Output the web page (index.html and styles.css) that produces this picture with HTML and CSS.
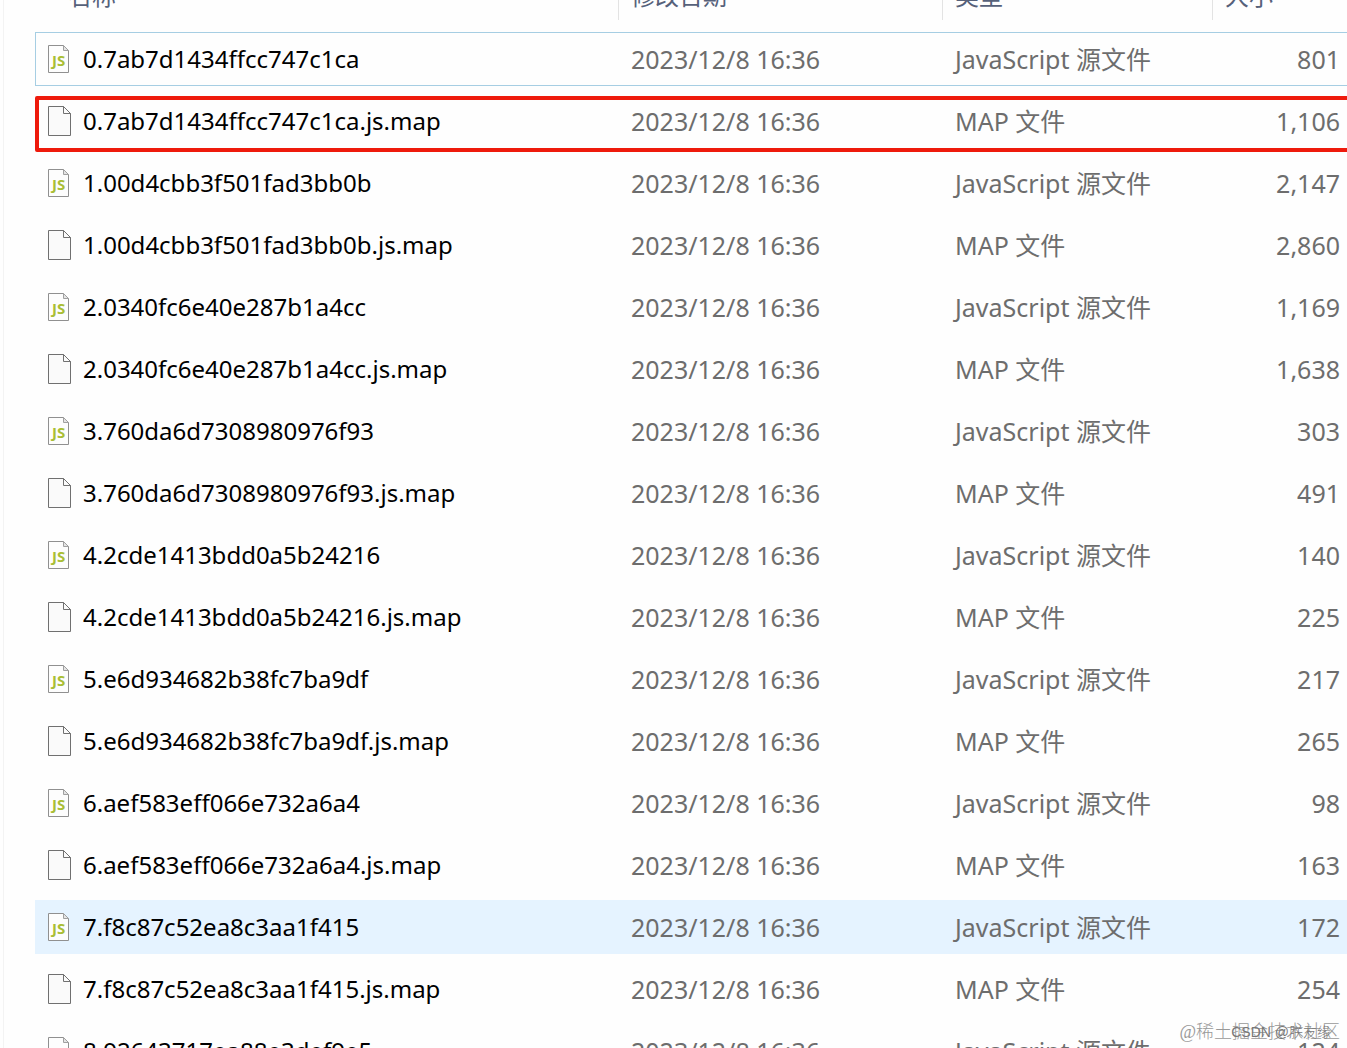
FILE: index.html
```html
<!DOCTYPE html>
<html lang="zh-CN">
  <head>
    <meta charset="utf-8">
    <title>文件列表</title>
    <link rel="stylesheet" href="styles.css">
  </head>
  <body>
    <svg class="symbols" aria-hidden="true">
      <symbol id="icon-js" viewBox="0 0 24 30">
        <path class="paper" d="M.5 1.5H15.5L20.5 6.5V28.5H.5Z" />
        <path class="fold" d="M15.5 1.5V6.5H20.5Z" />
        <text class="js-text" x="4" y="22">JS</text>
      </symbol>
      <symbol id="icon-file" viewBox="0 0 24 30">
        <path class="sheet" d="M.5 .5H15.5L22.5 7.5V29.5H.5Z" />
        <path class="sheet" d="M15.5 .5V7.5H22.5Z" />
      </symbol>
    </svg>

    <div class="explorer">
      <table class="files">
        <thead>
          <tr class="head">
            <th>名称</th>
            <th>修改日期</th>
            <th>类型</th>
            <th>大小</th>
          </tr>
        </thead>
        <tbody id="fileList"></tbody>
      </table>
      <div class="watermark">@稀土掘金技术社区</div>
      <div class="watermark author">CSDN @朕友缘</div>
    </div>

    <script src="script.js"></script>
  </body>
</html>
```
FILE: styles.css
```css
body {
  margin: 0;
  font-family: "Noto Sans", "Noto Sans CJK SC", sans-serif;
  font-size: 25px;
  line-height: 36px;
  color: #6d6d6d;
  background-color: #fefefe;
}
.symbols {
  position: absolute;
  width: 0;
  height: 0;
}
.explorer {
  position: relative;
  box-sizing: border-box;
  height: 100vh;
  margin-left: 3px;
  padding-left: 31px;
  border-left: 1px solid #f3f3f3;
  overflow: hidden;
}
.files,
.files thead {
  display: block;
}
.files tbody {
  display: flex;
  flex-direction: column;
  gap: 8px;
  margin-top: 12px;
}
.files tr {
  display: grid;
  grid-template-columns: 584px 324px 270px 1fr;
}

/* Header */
.head {
  height: 20px;
  overflow: hidden;
}
.head th {
  display: flex;
  align-items: flex-end;
  box-sizing: border-box;
  height: 20px;
  padding: 0 0 6px 12px;
  border-right: 1px solid #e3e3e3;
  font-size: 24px;
  font-weight: normal;
  color: #56617a;
}
.head th:first-child {
  padding-left: 33px;
}
.head th:last-child {
  border-right: none;
}

/* Rows */
.row {
  position: relative;
  box-sizing: border-box;
  height: 54px;
  align-items: center;
  border: 1px solid transparent;
  border-right: none;
}
.row td {
  padding: 0 7px 0 11px;
  white-space: nowrap;
}
.row .name {
  display: flex;
  align-items: center;
  gap: 11px;
  padding-left: 12px;
  font-size: 24px;
  color: #000;
}
.row .size {
  text-align: right;
}
.focused {
  border-color: #a6cee3;
}
.hovered {
  background-color: #e5f3ff;
}
.marked::after {
  content: "";
  position: absolute;
  inset: 1px -4px -5px -1px;
  border: 4px solid #ee1a0c;
  border-radius: 2px;
}

/* Icons */
.icon {
  width: 24px;
  height: 30px;
}
.paper {
  fill: #fdfdfd;
  stroke: #909090;
}
.fold {
  fill: #e4e4e4;
  stroke: #a0a0a0;
}
.sheet {
  fill: #fafafa;
  stroke: #707070;
}
.js-text {
  font-family: "Noto Sans", sans-serif;
  font-size: 15px;
  font-weight: bold;
  fill: #a9be35;
}

.watermark {
  position: absolute;
  right: 7px;
  bottom: 2px;
  font-family: "Liberation Serif", "Noto Sans CJK SC", serif;
  font-size: 18px;
  line-height: 28px;
  font-weight: 300;
  color: #999;
}
.author {
  right: 16px;
  font-family: "Liberation Sans", "Noto Sans CJK SC", sans-serif;
  font-size: 14px;
  color: #777;
}
```
FILE: script.js
```js
// Files: name, size
var files = [
  ["0.7ab7d1434ffcc747c1ca", "801"],
  ["0.7ab7d1434ffcc747c1ca.js.map", "1,106"],
  ["1.00d4cbb3f501fad3bb0b", "2,147"],
  ["1.00d4cbb3f501fad3bb0b.js.map", "2,860"],
  ["2.0340fc6e40e287b1a4cc", "1,169"],
  ["2.0340fc6e40e287b1a4cc.js.map", "1,638"],
  ["3.760da6d7308980976f93", "303"],
  ["3.760da6d7308980976f93.js.map", "491"],
  ["4.2cde1413bdd0a5b24216", "140"],
  ["4.2cde1413bdd0a5b24216.js.map", "225"],
  ["5.e6d934682b38fc7ba9df", "217"],
  ["5.e6d934682b38fc7ba9df.js.map", "265"],
  ["6.aef583eff066e732a6a4", "98"],
  ["6.aef583eff066e732a6a4.js.map", "163"],
  ["7.f8c87c52ea8c3aa1f415", "172"],
  ["7.f8c87c52ea8c3aa1f415.js.map", "254"],
  ["8.92643717ea88e3def9e5", "124"]
];

// Row states by index
var states = { 0: "focused", 1: "marked", 14: "hovered" };

var fileList = document.getElementById("fileList");

for (var i = 0; i < files.length; i++) {
  var isMap = files[i][0].indexOf(".map") > -1;
  var row = document.createElement("tr");
  row.className = "row " + (states[i] || "");
  row.innerHTML =
    `<td class="name"><svg class="icon"><use href="#${isMap ? "icon-file" : "icon-js"}" /></svg>${files[i][0]}</td>
     <td>2023/12/8 16:36</td>
     <td>${isMap ? "MAP 文件" : "JavaScript 源文件"}</td>
     <td class="size">${files[i][1]}</td>`;
  fileList.appendChild(row);
}
```
